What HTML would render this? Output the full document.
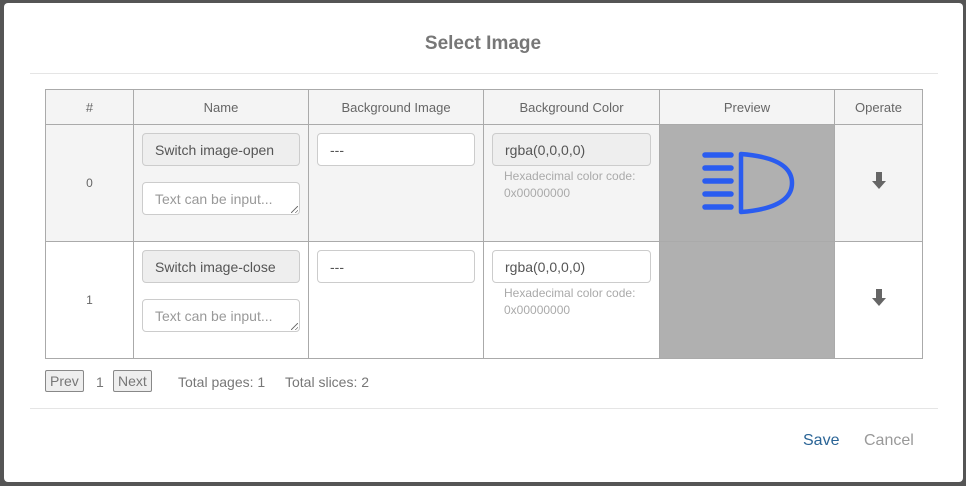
<!DOCTYPE html>
<html><head><meta charset="utf-8"><style>
*{box-sizing:border-box;margin:0;padding:0}
body{width:966px;height:486px;background:#555;font-family:"Liberation Sans",Arial,sans-serif;position:relative;overflow:hidden}
.modal{position:absolute;left:4px;top:3px;width:959px;height:479px;background:#fff;border-radius:4px}
.a{position:absolute}
.title{left:0;width:966px;top:33px;text-align:center;font-size:19px;font-weight:bold;color:#777}
.hr{left:30px;width:908px;height:1px;background:#e5e5e5}
table{position:absolute;left:45px;top:89px;border-collapse:collapse;font-size:13px;color:#666}
td,th{border:1px solid #aaa;text-align:center;vertical-align:middle;font-weight:normal}
th{height:35px;background:#f4f4f4}
tr.r td{height:117px}
.inp{position:absolute;border:1px solid #ccc;border-radius:4px;height:33px;font-size:14px;color:#555;padding-left:12px;line-height:33px;text-align:left;background:#fff}
.dis{background:#eee}
.ph{color:#999}
.hex{position:absolute;font-size:12px;color:#aaa;text-align:left;line-height:17px}
.btn{position:absolute;border:1px solid #888;background:#eee;border-radius:2px;font-size:14px;color:#777;height:22px;line-height:21px;padding:0 4px}
.t{font-size:14px;color:#777}
.rz{position:absolute;width:7px;height:7px;background:linear-gradient(135deg,transparent 45%,#777 45%,#777 55%,transparent 55%,transparent 75%,#777 75%,#777 85%,transparent 85%)}
</style></head><body>
<div class="modal"></div>
<div class="a title">Select Image</div>
<div class="a hr" style="top:73px"></div>
<table>
<tr><th style="width:88px">#</th><th style="width:175px">Name</th><th style="width:175px">Background Image</th><th style="width:176px">Background Color</th><th style="width:175px">Preview</th><th style="width:88px">Operate</th></tr>
<tr class="r" style="background:#f4f4f4"><td style="font-size:12px">0</td><td></td><td></td><td></td><td style="background:#b0b0b0"></td><td></td></tr>
<tr class="r"><td style="font-size:12px">1</td><td></td><td></td><td></td><td style="background:#b0b0b0"></td><td></td></tr>
</table>
<div class="inp dis" style="left:142px;top:133px;width:158px">Switch image-open</div>
<div class="inp ph" style="left:142px;top:182px;width:158px">Text can be input...</div>
<div class="rz" style="left:291px;top:206px"></div>
<div class="inp" style="left:317px;top:133px;width:158px">---</div>
<div class="inp dis" style="left:492px;top:133px;width:159px">rgba(0,0,0,0)</div>
<div class="hex" style="left:504px;top:168px">Hexadecimal color code:<br>0x00000000</div>
<div class="inp dis" style="left:142px;top:250px;width:158px">Switch image-close</div>
<div class="inp ph" style="left:142px;top:299px;width:158px">Text can be input...</div>
<div class="rz" style="left:291px;top:323px"></div>
<div class="inp" style="left:317px;top:250px;width:158px">---</div>
<div class="inp" style="left:492px;top:250px;width:159px">rgba(0,0,0,0)</div>
<div class="hex" style="left:504px;top:285px">Hexadecimal color code:<br>0x00000000</div>
<svg class="a" style="left:700px;top:150px" width="96" height="66" viewBox="0 0 96 66">
<g stroke="#2a5cf0" fill="none">
<path d="M5 5H31M5 18H31M5 31H31M5 44H31M5 57H31" stroke-width="5.5" stroke-linecap="round"/>
<path d="M41 4V62Q92 58 92 33Q92 8 41 4Z" stroke-width="4.5" stroke-linejoin="round"/>
</g></svg>
<svg class="a" style="left:871px;top:172px" width="16" height="18" viewBox="0 0 16 18"><path d="M5 0H11V9H15L8 17L1 9H5Z" fill="#666"/></svg>
<svg class="a" style="left:871px;top:289px" width="16" height="18" viewBox="0 0 16 18"><path d="M5 0H11V9H15L8 17L1 9H5Z" fill="#666"/></svg>
<div class="btn" style="left:45px;top:370px">Prev</div>
<div class="a t" style="left:96px;top:374px">1</div>
<div class="btn" style="left:113px;top:370px">Next</div>
<div class="a t" style="left:178px;top:374px">Total pages: 1</div>
<div class="a t" style="left:285px;top:374px">Total slices: 2</div>
<div class="a hr" style="top:408px"></div>
<div class="a" style="left:803px;top:432px;font-size:16px;color:#2a6496">Save</div>
<div class="a" style="left:864px;top:432px;font-size:16px;color:#999">Cancel</div>
</body></html>
